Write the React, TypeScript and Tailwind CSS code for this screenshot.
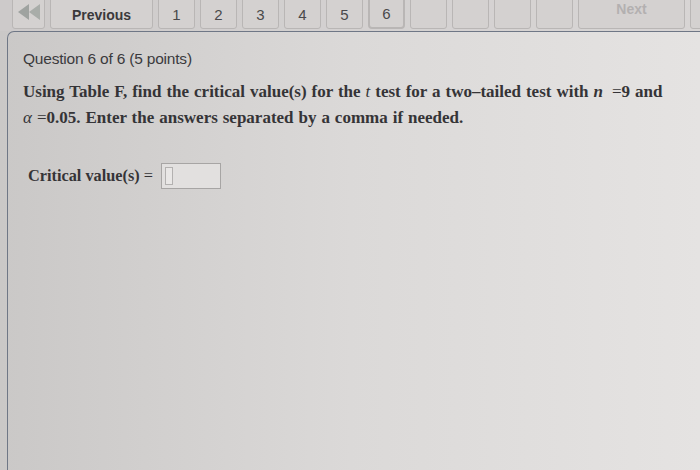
import React from 'react'

const pages = ['1', '2', '3', '4', '5', '6', '', '', '', '']

function BackArrows() {
  return (
    <svg width="26" height="20" viewBox="0 0 26 20" className="block">
      <polygon points="13,2 2,10 13,18" fill="#9fa3a0" />
      <polygon points="24,2 13,10 24,18" fill="#a9ada9" />
    </svg>
  )
}

export default function App() {
  const boxBase =
    'h-[40px] -mt-[11px] rounded-[3px] border border-[#b9b6b5] bg-[#d4d1d0] flex items-end justify-center pb-[6px] shrink-0'
  const serif = { fontFamily: '"Liberation Serif", "Times New Roman", serif' }

  return (
    <div
      className="w-[700px] h-[470px] overflow-hidden bg-gradient-to-r from-[#cac8c7] via-[#dbd9d8] to-[#e5e3e2]"
      style={{ fontFamily: '"Liberation Sans", Arial, sans-serif' }}
    >
      <div className="h-[31px] flex items-start pl-[12px] gap-[5px] overflow-hidden bg-[#cfcccb]/60">
        <div className={`${boxBase} w-[33px] pb-[5px]`}>
          <BackArrows />
        </div>
        <div className={`${boxBase} w-[103px]`}>
          <span className="text-[14px] font-bold text-[#3a393b] leading-none">Previous</span>
        </div>
        {pages.map((p, i) => {
          const active = i === 1
          const current = i === 5
          return (
            <div
              key={i}
              className={`${boxBase} w-[37px] ${active ? 'bg-[#a9b3bf] border-[#a2acb8]' : ''} ${
                current ? 'border-2 border-[#4d7fc4] rounded-[4px]' : ''
              }`}
            >
              <span className="text-[15px] text-[#4a494b] leading-none">{p}</span>
            </div>
          )
        })}
        <div className={`${boxBase} w-[107px]`}>
          <span className="text-[14px] font-bold text-[#b3b0b0] leading-none mb-[6px]">Next</span>
        </div>
        <div className={`${boxBase} w-[20px]`} />
      </div>

      <div className="ml-[7px] h-[439px] border-l border-t border-[#6f7786] rounded-tl-[7px] pt-[17px] pl-[15px]">
        <div className="text-[15.5px] text-[#3b3a3d] leading-[20px] tracking-[-0.2px]">Question 6 of 6 (5 points)</div>

        <div className="mt-[10px] text-[17px] font-bold text-[#353437] leading-[26px] [word-spacing:0.7px]" style={serif}>
          <div>
            Using Table F, find the critical value(s) for the <i className="font-normal">t</i> test for a two–tailed
            test with <i>n</i> <span className="font-normal ml-[4px]">=</span>9 and
          </div>
          <div>
            <i className="font-normal">α</i> <span className="font-normal">=</span>0.05. Enter the answers separated by
            a comma if needed.
          </div>
        </div>

        <div className="mt-[32px] ml-[5px] flex items-center gap-[8px] text-[16.3px] font-bold text-[#353437]" style={serif}>
          <span>
            Critical value(s) <span className="font-normal">=</span>
          </span>
          <div className="w-[60px] h-[26px] border border-[#a7a5a4] bg-[#e2e0df] flex items-center pl-[3px]">
            <div className="w-[8px] h-[18px] border border-[#b3b1b0] bg-[#e9e7e6]" />
          </div>
        </div>
      </div>
    </div>
  )
}
